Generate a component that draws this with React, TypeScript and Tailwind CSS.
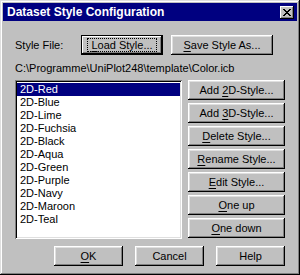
import React from "react";

const font = { fontFamily: '"Liberation Sans", Arial, sans-serif' };

function U({ children }: { children: React.ReactNode }) {
  return <span className="underline underline-offset-[2px]">{children}</span>;
}

function Btn({
  children,
  className = "",
  focused = false,
}: {
  children: React.ReactNode;
  className?: string;
  focused?: boolean;
}) {
  return (
    <div
      className={
        "relative flex items-center justify-center h-[20px] text-[11px] text-black bg-[#c0c0c0] " +
        (focused
          ? "shadow-[inset_-1px_-1px_#000,inset_1px_1px_#000,inset_-2px_-2px_#000,inset_2px_2px_#fff,inset_-3px_-3px_#808080] "
          : "shadow-[inset_-1px_-1px_#000,inset_1px_1px_#fff,inset_-2px_-2px_#808080,inset_2px_2px_#dfdfdf] ") +
        className
      }
    >
      {focused ? (
        <span className="px-[3px] leading-[12px] outline outline-1 outline-dotted outline-black outline-offset-0">
          {children}
        </span>
      ) : (
        <span className="leading-[12px]">{children}</span>
      )}
    </div>
  );
}

const items = [
  "2D-Red",
  "2D-Blue",
  "2D-Lime",
  "2D-Fuchsia",
  "2D-Black",
  "2D-Aqua",
  "2D-Green",
  "2D-Purple",
  "2D-Navy",
  "2D-Maroon",
  "2D-Teal",
];

export default function App() {
  return (
    <div
      style={font}
      className="w-[300px] h-[275px] bg-[#c0c0c0] p-[3px] flex flex-col shadow-[inset_-1px_-1px_#000,inset_1px_1px_#dfdfdf,inset_-2px_-2px_#808080,inset_2px_2px_#fff]"
    >
      <div className="h-[18px] bg-[#000080] flex items-center justify-between pl-[4px] pr-[3px]">
        <span className="text-white font-bold text-[12px] leading-none">
          Dataset Style Configuration
        </span>
        <div className="w-[14px] h-[13px] bg-[#c0c0c0] flex items-center justify-center shadow-[inset_-1px_-1px_#000,inset_1px_1px_#fff,inset_-2px_-2px_#808080]">
          <svg width="8" height="7" viewBox="0 0 8 7">
            <path d="M0 0h2v1h1v1h2V1h1V0h2v1H7v1H6v1H5v1h1v1h1v1h1v1H6V6H5V5H3v1H2v1H0V6h1V5h1V4h1V3H2V2H1V1H0z" fill="#000" />
          </svg>
        </div>
      </div>

      <div className="flex items-center mt-[14px] pl-[12px]">
        <span className="w-[66px] text-[11px] text-black">Style File:</span>
        <Btn focused className="w-[82px]">
          <U>L</U>oad Style...
        </Btn>
        <Btn className="w-[102px] ml-[8px]">
          <U>S</U>ave Style As...
        </Btn>
      </div>

      <div className="mt-[7px] pl-[12px] text-[11px] leading-[13px] text-black">
        C:\Programme\UniPlot248\template\Color.icb
      </div>

      <div className="flex mt-[5px] pl-[12px]">
        <div className="w-[167px] h-[159px] bg-white p-[2px] shadow-[inset_1px_1px_#808080,inset_-1px_-1px_#fff,inset_2px_2px_#000,inset_-2px_-2px_#dfdfdf]">
          <div className="flex flex-col pt-[1px]">
            {items.map((it, i) => (
              <div
                key={it}
                className={
                  "h-[13px] leading-[13px] text-[11px] pl-[3px] " +
                  (i === 0 ? "bg-[#000080] text-white" : "text-black")
                }
              >
                {it}
              </div>
            ))}
          </div>
        </div>
        <div className="ml-[6px] w-[97px] flex flex-col gap-[3px]">
          <Btn>
            Add <U>2</U>D-Style...
          </Btn>
          <Btn>
            Add <U>3</U>D-Style...
          </Btn>
          <Btn>
            <U>D</U>elete Style...
          </Btn>
          <Btn>
            <U>R</U>ename Style...
          </Btn>
          <Btn>
            <U>E</U>dit Style...
          </Btn>
          <Btn>
            <U>O</U>ne up
          </Btn>
          <Btn>
            <U>O</U>ne down
          </Btn>
        </div>
      </div>

      <div className="flex mt-[7px] pl-[51px] gap-[12px]">
        <Btn className="w-[69px]">
          <U>O</U>K
        </Btn>
        <Btn className="w-[69px]">Cancel</Btn>
        <Btn className="w-[69px]">Help</Btn>
      </div>
    </div>
  );
}
